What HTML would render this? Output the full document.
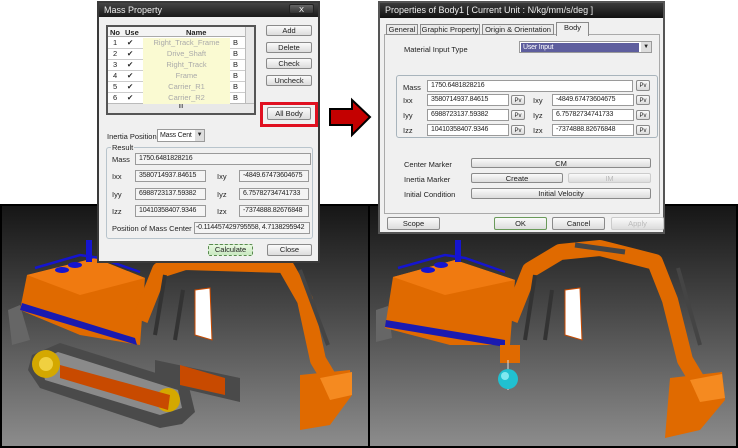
<!DOCTYPE html>
<html><head><meta charset="utf-8"><style>
*{margin:0;padding:0;box-sizing:border-box}
body{width:738px;height:448px;background:#fff;position:relative;overflow:hidden;font-family:"Liberation Sans",sans-serif;font-size:7.5px;color:#222}
.a{position:absolute}
.bg{position:absolute;top:204px;height:244px;background:linear-gradient(#161616,#4a4a4a 45%,#8c8c8c);border:2px solid #000}
.dlg{position:absolute;background:#f0f0f0;border:2px solid #3a3a3a}
.tb{position:absolute;left:0;right:0;top:0;height:14px;background:linear-gradient(#444,#1a1a1a);color:#eee;font-size:9px;padding:2px 5px;white-space:nowrap}
.btn{position:absolute;border:1px solid #8a8a8a;border-radius:2px;background:linear-gradient(#fafafa,#dcdcdc);text-align:center;font-size:7.5px;line-height:10px;color:#222}
.fld{position:absolute;border:1px solid #9a9a9a;background:#f4f4f4;padding-left:3px;font-size:7px;letter-spacing:-0.2px;line-height:10px;white-space:nowrap;overflow:hidden}
.lbl{position:absolute;font-size:7.5px;white-space:nowrap}
.grp{position:absolute;border:1px solid #b8c4cc;border-radius:3px}
</style></head><body>

<div class="bg" style="left:0;width:370px"></div>
<div class="bg" style="left:368px;width:370px"></div>

<svg class="a" style="left:0;top:0" width="738" height="448">
<g>
<polygon points="8,310 20,305 30,340 12,345" fill="#666"/>
<polygon points="32,355 60,343 188,383 195,412 182,424 160,428 40,388 28,370" fill="#4a4a4a"/>
<polygon points="40,360 58,352 178,390 182,408 160,415 45,380" fill="#8a8a8a"/>
<circle cx="46" cy="364" r="14" fill="#d4a800"/><circle cx="46" cy="364" r="7" fill="#f0d040"/>
<circle cx="168" cy="400" r="12" fill="#d4a800"/>
<polygon points="60,365 170,395 168,410 60,378" fill="#c84a00"/>
<polygon points="155,360 240,378 240,402 155,382" fill="#4a4a4a"/>
<polygon points="180,365 225,378 225,395 180,385" fill="#c84a00"/>
<polygon points="27,275 95,258 145,278 140,345 80,335 20,310" fill="#e06a00"/>
<polygon points="27,275 95,258 145,278 80,295" fill="#f07a10"/>
<polygon points="22,303 135,338 137,345 20,310" fill="#1a1ab0"/>
<polyline points="35,268 80,255 100,258 140,272" fill="none" stroke="#1515d0" stroke-width="2.5"/>
<rect x="86" y="240" width="6" height="22" fill="#1515d0"/>
<ellipse cx="62" cy="270" rx="7" ry="3" fill="#1515d0"/><ellipse cx="75" cy="265" rx="7" ry="3" fill="#1515d0"/>
<polyline points="140,320 160,270 185,262 285,265 305,300 318,360 330,380" fill="none" stroke="#e06a00" stroke-width="16" stroke-linejoin="round"/>
<polygon points="195,290 210,288 212,340 195,335" fill="#fff" stroke="#c84a00"/>
<polygon points="300,375 350,370 352,395 330,425 300,430" fill="#e06a00"/>
<polygon points="320,378 352,372 352,395 330,400" fill="#f58a20"/>
<line x1="165" y1="275" x2="155" y2="335" stroke="#333" stroke-width="4"/>
<line x1="183" y1="290" x2="175" y2="340" stroke="#333" stroke-width="4"/>
<line x1="300" y1="270" x2="328" y2="345" stroke="#444" stroke-width="4"/>
</g>
<g>
<polygon points="376,310 388,306 392,338 376,342" fill="#666"/>
<polygon points="393,277 455,260 515,280 510,345 450,345 385,328" fill="#e06a00"/>
<polygon points="393,277 455,260 515,280 445,295" fill="#f07a10"/>
<polygon points="386,320 505,340 505,347 385,327" fill="#1a1ab0"/>
<polyline points="398,268 445,255 465,258 505,272" fill="none" stroke="#1515d0" stroke-width="2.5"/>
<rect x="455" y="240" width="6" height="22" fill="#1515d0"/>
<ellipse cx="428" cy="270" rx="7" ry="3" fill="#1515d0"/><ellipse cx="441" cy="265" rx="7" ry="3" fill="#1515d0"/>
<rect x="500" y="345" width="20" height="18" fill="#e06a00"/>
<polyline points="510,320 530,270 560,252 600,248 655,262 670,300 685,360 700,385" fill="none" stroke="#e06a00" stroke-width="16" stroke-linejoin="round"/>
<polygon points="565,290 580,288 582,340 565,335" fill="#fff" stroke="#c84a00"/>
<polygon points="670,378 722,372 725,400 700,430 665,438" fill="#e06a00"/>
<polygon points="690,380 722,374 725,398 700,402" fill="#f58a20"/>
<line x1="575" y1="245" x2="625" y2="252" stroke="#444" stroke-width="5"/>
<line x1="535" y1="275" x2="525" y2="340" stroke="#333" stroke-width="4"/>
<line x1="552" y1="290" x2="545" y2="340" stroke="#333" stroke-width="4"/>
<line x1="678" y1="268" x2="700" y2="345" stroke="#444" stroke-width="4"/>
<line x1="508" y1="360" x2="508" y2="390" stroke="#ddd" stroke-width="1"/>
<circle cx="508" cy="379" r="10" fill="#20c0d0"/><circle cx="505" cy="376" r="4" fill="#80e8f0"/>
</g>
<polygon points="330,109 352,109 352,100 370,117 352,135 352,125 330,125" fill="#c40000" stroke="#000" stroke-width="2"/>
</svg>

<div class="dlg" style="left:97px;top:1px;width:223px;height:262px">
<div class="tb">Mass Property</div>
<div class="btn" style="left:190px;top:1px;width:25px;height:10px;background:linear-gradient(#666,#333);color:#fff;border-color:#222">X</div>
<div class="a" style="left:7px;top:22px;width:150px;height:90px;border:2px solid #555;background:#fff"></div>
<div class="a" style="left:9px;top:24px;width:137px;height:10px;background:#f4f4f4;border-bottom:1px solid #aaa;font-size:7.5px;font-weight:bold">
<span class="a" style="left:2px;top:1px">No</span><span class="a" style="left:17px;top:1px">Use</span><span class="a" style="left:78px;top:1px">Name</span></div>
<div class="a" style="left:146px;top:24px;width:9px;height:76px;background:#e8e8e8;border-left:1px solid #bbb"></div>
<div class="a" style="left:9px;top:100px;width:146px;height:10px;background:#e8e8e8;border-top:1px solid #bbb;text-align:center;font-size:6px">III</div>
<div class="a" style="left:9px;top:35px;width:137px">
 <div style="height:11px;position:relative;border-bottom:1px solid #ccc"><span class="a" style="left:5px">1</span><span class="a" style="left:19px;top:0">✔</span><span class="a" style="left:35px;width:87px;height:11px;background:#fafad2;color:#aaa;text-align:center">Right_Track_Frame</span><span class="a" style="left:125px">B</span></div>
 <div style="height:11px;position:relative;border-bottom:1px solid #ccc"><span class="a" style="left:5px">2</span><span class="a" style="left:19px">✔</span><span class="a" style="left:35px;width:87px;height:11px;background:#fafad2;color:#aaa;text-align:center">Drive_Shaft</span><span class="a" style="left:125px">B</span></div>
 <div style="height:11px;position:relative;border-bottom:1px solid #ccc"><span class="a" style="left:5px">3</span><span class="a" style="left:19px">✔</span><span class="a" style="left:35px;width:87px;height:11px;background:#fafad2;color:#aaa;text-align:center">Right_Track</span><span class="a" style="left:125px">B</span></div>
 <div style="height:11px;position:relative;border-bottom:1px solid #ccc"><span class="a" style="left:5px">4</span><span class="a" style="left:19px">✔</span><span class="a" style="left:35px;width:87px;height:11px;background:#fafad2;color:#aaa;text-align:center">Frame</span><span class="a" style="left:125px">B</span></div>
 <div style="height:11px;position:relative;border-bottom:1px solid #ccc"><span class="a" style="left:5px">5</span><span class="a" style="left:19px">✔</span><span class="a" style="left:35px;width:87px;height:11px;background:#fafad2;color:#aaa;text-align:center">Carrier_R1</span><span class="a" style="left:125px">B</span></div>
 <div style="height:11px;position:relative"><span class="a" style="left:5px">6</span><span class="a" style="left:19px">✔</span><span class="a" style="left:35px;width:87px;height:11px;background:#fafad2;color:#aaa;text-align:center">Carrier_R2</span><span class="a" style="left:125px">B</span></div>
</div>
<div class="btn" style="left:167px;top:22px;width:46px;height:11px">Add</div>
<div class="btn" style="left:167px;top:39px;width:46px;height:11px">Delete</div>
<div class="btn" style="left:167px;top:55px;width:46px;height:11px">Check</div>
<div class="btn" style="left:167px;top:72px;width:46px;height:11px">Uncheck</div>
<div class="a" style="left:161px;top:99px;width:58px;height:25px;border:3px solid #e01020"></div>
<div class="btn" style="left:168px;top:104px;width:44px;height:13px;line-height:12px">All Body</div>
<div class="lbl" style="left:8px;top:129px">Inertia Position</div>
<div class="fld" style="left:58px;top:126px;width:48px;height:13px;background:#fff;line-height:11px;padding-left:2px">Mass Cent<span class="a" style="right:0;top:0;width:9px;height:11px;background:#ddd;text-align:center;font-size:6px">▼</span></div>
<div class="grp" style="left:7px;top:144px;width:207px;height:92px"></div>
<div class="lbl" style="left:12px;top:140px;background:#f0f0f0;padding:0 1px">Result</div>
<div class="lbl" style="left:13px;top:152px">Mass</div><div class="fld" style="left:36px;top:150px;width:176px;height:12px">1750.6481828216</div>
<div class="lbl" style="left:13px;top:169px">Ixx</div><div class="fld" style="left:36px;top:167px;width:71px;height:12px">3580714937.84615</div>
<div class="lbl" style="left:118px;top:169px">Ixy</div><div class="fld" style="left:140px;top:167px;width:70px;height:12px">-4849.67473604675</div>
<div class="lbl" style="left:13px;top:187px">Iyy</div><div class="fld" style="left:36px;top:185px;width:71px;height:12px">6988723137.59382</div>
<div class="lbl" style="left:118px;top:187px">Iyz</div><div class="fld" style="left:140px;top:185px;width:70px;height:12px">6.75782734741733</div>
<div class="lbl" style="left:13px;top:204px">Izz</div><div class="fld" style="left:36px;top:202px;width:71px;height:12px">10410358407.9346</div>
<div class="lbl" style="left:118px;top:204px">Izx</div><div class="fld" style="left:140px;top:202px;width:70px;height:12px">-7374888.82676848</div>
<div class="lbl" style="left:13px;top:221px">Position of Mass Center</div><div class="fld" style="left:95px;top:219px;width:116px;height:12px;padding-left:1px">-0.114457429795558, 4.7138295942</div>
<div class="btn" style="left:109px;top:241px;width:45px;height:12px;background:linear-gradient(#e8f8e0,#c8e8c0);border:1px dashed #5a8a50">Calculate</div>
<div class="btn" style="left:168px;top:241px;width:45px;height:12px">Close</div>
</div>

<div class="dlg" style="left:378px;top:1px;width:287px;height:233px;border-color:#555">
<div class="tb" style="height:15px;background:linear-gradient(#3a3a3a,#111)">Properties of Body1 [ Current Unit : N/kg/mm/s/deg ]</div>
<div class="a" style="left:4px;top:31px;width:276px;height:180px;border:1px solid #aaa;background:#f0f0f0"></div>
<div class="btn" style="left:6px;top:21px;width:32px;height:11px;border-radius:0;background:#eaeaea">General</div>
<div class="btn" style="left:40px;top:21px;width:60px;height:11px;border-radius:0;background:#eaeaea">Graphic Property</div>
<div class="btn" style="left:102px;top:21px;width:72px;height:11px;border-radius:0;background:#eaeaea">Origin &amp; Orientation</div>
<div class="btn" style="left:176px;top:19px;width:33px;height:14px;border-radius:0;background:#f0f0f0;border-bottom:none">Body</div>
<div class="lbl" style="left:24px;top:42px">Material Input Type</div>
<div class="fld" style="left:139px;top:38px;width:133px;height:12px;background:#fff;padding:0"><span class="a" style="left:1px;top:1px;width:118px;height:9px;background:#5e5e9e;color:#fff;padding-left:2px;line-height:9px">User Input</span><span class="a" style="right:0;top:0;width:10px;height:10px;background:#ddd;text-align:center;font-size:6px">▼</span></div>
<div class="grp" style="left:16px;top:72px;width:262px;height:63px;border-color:#a8b4bc"></div>
<div class="lbl" style="left:23px;top:80px">Mass</div><div class="fld" style="left:47px;top:77px;width:206px;height:12px;background:#fff">1750.6481828216</div><div class="btn" style="left:256px;top:77px;width:14px;height:11px;font-size:6px">Pv</div>
<div class="lbl" style="left:23px;top:93px">Ixx</div><div class="fld" style="left:47px;top:91px;width:82px;height:12px;background:#fff">3580714937.84615</div><div class="btn" style="left:131px;top:92px;width:14px;height:10px;font-size:6px">Pv</div>
<div class="lbl" style="left:153px;top:93px">Ixy</div><div class="fld" style="left:172px;top:91px;width:82px;height:12px;background:#fff">-4849.67473604675</div><div class="btn" style="left:256px;top:92px;width:14px;height:10px;font-size:6px">Pv</div>
<div class="lbl" style="left:23px;top:108px">Iyy</div><div class="fld" style="left:47px;top:106px;width:82px;height:12px;background:#fff">6988723137.59382</div><div class="btn" style="left:131px;top:107px;width:14px;height:10px;font-size:6px">Pv</div>
<div class="lbl" style="left:153px;top:108px">Iyz</div><div class="fld" style="left:172px;top:106px;width:82px;height:12px;background:#fff">6.75782734741733</div><div class="btn" style="left:256px;top:107px;width:14px;height:10px;font-size:6px">Pv</div>
<div class="lbl" style="left:23px;top:123px">Izz</div><div class="fld" style="left:47px;top:121px;width:82px;height:12px;background:#fff">10410358407.9346</div><div class="btn" style="left:131px;top:122px;width:14px;height:10px;font-size:6px">Pv</div>
<div class="lbl" style="left:153px;top:123px">Izx</div><div class="fld" style="left:172px;top:121px;width:82px;height:12px;background:#fff">-7374888.82676848</div><div class="btn" style="left:256px;top:122px;width:14px;height:10px;font-size:6px">Pv</div>
<div class="lbl" style="left:24px;top:157px">Center Marker</div><div class="btn" style="left:91px;top:155px;width:180px;height:10px;line-height:9px">CM</div>
<div class="lbl" style="left:24px;top:172px">Inertia Marker</div><div class="btn" style="left:91px;top:170px;width:92px;height:10px;line-height:9px">Create</div><div class="btn" style="left:188px;top:170px;width:83px;height:10px;line-height:9px;color:#bbb;border-color:#ccc">IM</div>
<div class="lbl" style="left:24px;top:187px">Initial Condition</div><div class="btn" style="left:91px;top:185px;width:180px;height:11px">Initial Velocity</div>
<div class="btn" style="left:7px;top:214px;width:53px;height:13px;line-height:12px">Scope</div>
<div class="btn" style="left:114px;top:214px;width:53px;height:13px;line-height:12px;border-color:#6a9a5a">OK</div>
<div class="btn" style="left:172px;top:214px;width:53px;height:13px;line-height:12px">Cancel</div>
<div class="btn" style="left:231px;top:214px;width:53px;height:13px;line-height:12px;color:#bbb;border-color:#ccc">Apply</div>
</div>
</body></html>
